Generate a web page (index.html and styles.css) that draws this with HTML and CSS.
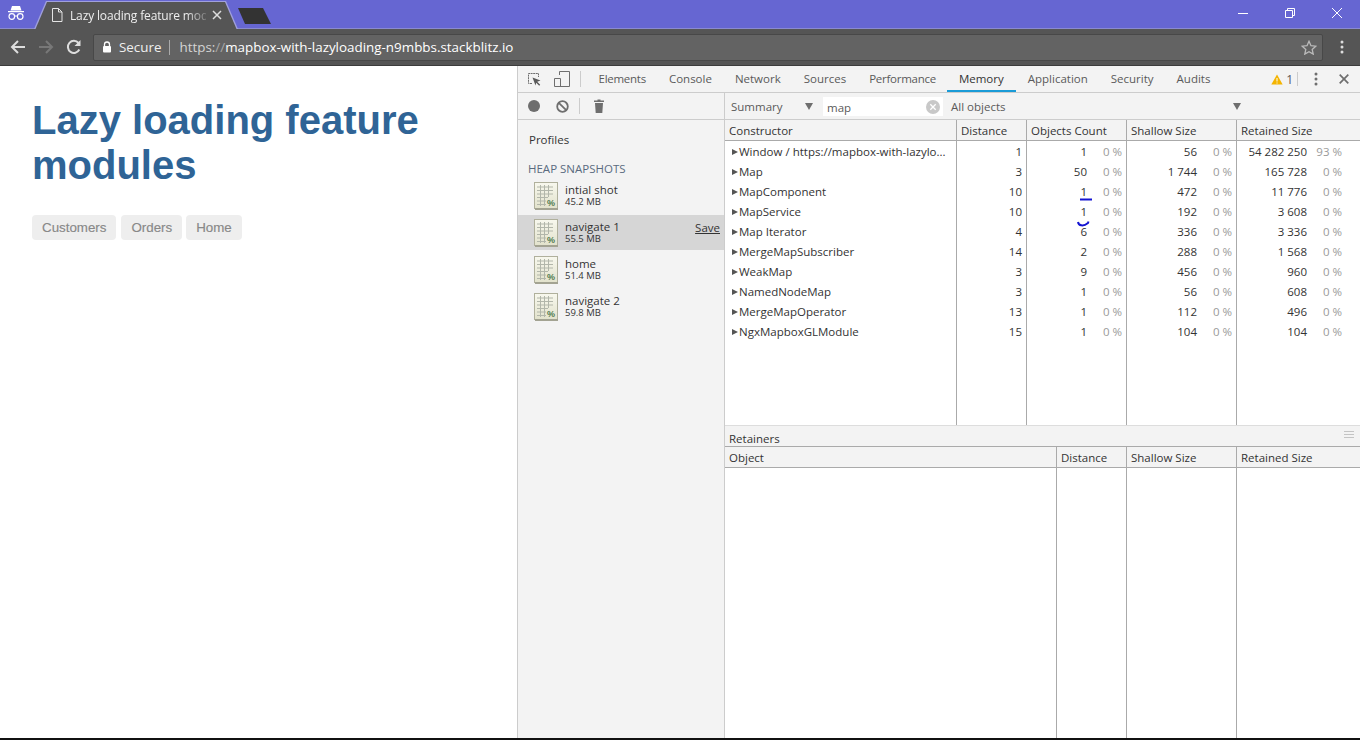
FILE: index.html
```html
<!DOCTYPE html>
<html lang="en">
<head>
<meta charset="utf-8">
<title>Lazy loading feature modules</title>
<link rel="stylesheet" href="styles.css">
</head>
<body>
<svg class="defs" width="0" height="0" aria-hidden="true">
  <defs>
    <linearGradient id="snapbg" x1="0" y1="0" x2="0" y2="1">
      <stop offset="0" stop-color="#f8f8ee"/>
      <stop offset="1" stop-color="#e2e2cc"/>
    </linearGradient>
    <symbol id="snap" viewBox="0 0 24 28">
      <rect x="0.5" y="0.5" width="23" height="26" fill="url(#snapbg)" stroke="#b0b09c"/>
      <rect x="1" y="26" width="23" height="2" fill="#a3a392"/>
      <path d="M3 5H19M3 8.500H19M3 12H19M3 15.500H14M3 19H12M3 22.500H12M6.500 3V24M10.500 3V24M14.500 3V15" stroke="#b2b6aa" stroke-width="1" fill="none"/>
      <text x="13" y="24" class="snap-pct">%</text>
    </symbol>
  </defs>
</svg>
<header class="titlebar">
  <svg class="incognito" width="18" height="16" viewBox="0 0 18 16"><path d="M5 1h8l1.500 4.500h-11zM1 6h16v1.200H1z" fill="#fff"/><circle cx="4.800" cy="11.500" r="2.800" fill="none" stroke="#fff" stroke-width="1.200"/><circle cx="13.200" cy="11.500" r="2.800" fill="none" stroke="#fff" stroke-width="1.200"/><path d="M7.500 11h3" stroke="#fff"/></svg>
  <div class="tab">
    <svg class="page-icon" width="12" height="14" viewBox="0 0 12 14"><path d="M1.500.5h6l3.500 3.500v9.500h-9.500zM7.500.5v3.500h3.500" fill="none" stroke="#e4e4e4"/></svg>
    <span class="tab-title">Lazy loading feature mod</span>
    <svg class="tab-close" width="10" height="10" viewBox="0 0 10 10"><path d="M1 1l8 8M9 1l-8 8" stroke="#ddd" stroke-width="1.500"/></svg>
  </div>
  <div class="newtab"></div>
  <div class="window-buttons">
    <svg width="12" height="12" viewBox="0 0 12 12"><path d="M1 6.500h10" stroke="#fff"/></svg>
    <svg width="12" height="12" viewBox="0 0 12 12"><path d="M3.500 3V1.500h7v7H9M1.500 3.500h7v7h-7z" fill="none" stroke="#fff"/></svg>
    <svg width="12" height="12" viewBox="0 0 12 12"><path d="M1 1l10 10M11 1L1 11" stroke="#fff"/></svg>
  </div>
</header>
<nav class="toolbar">
  <svg class="nav-icon" width="16" height="16" viewBox="0 0 16 16"><path d="M15 8H2.500M8 2L2 8l6 6" fill="none" stroke="#ddd" stroke-width="2"/></svg>
  <svg class="nav-icon" width="16" height="16" viewBox="0 0 16 16"><path d="M1 8h12.500M8 2l6 6-6 6" fill="none" stroke="#787878" stroke-width="2"/></svg>
  <svg class="nav-icon" width="16" height="16" viewBox="0 0 16 16"><path d="M13.300 10.500A6 6 0 1 1 12.500 4" fill="none" stroke="#ddd" stroke-width="2"/><path d="M14.500 1v6h-6z" fill="#ddd"/></svg>
  <div class="omnibox">
    <svg width="10" height="12" viewBox="0 0 10 12"><path d="M2.500 5V3.500a2.500 2.500 0 0 1 5 0V5" fill="none" stroke="#fff" stroke-width="1.300"/><rect x="1" y="5" width="8" height="6.500" rx="1" fill="#fff"/></svg>
    <span class="secure">Secure</span>
    <span class="omni-sep"></span>
    <span class="url"><span class="url-scheme">https:<span class="url-slashes">//</span></span>mapbox-with-lazyloading-n9mbbs.stackblitz.io</span>
    <svg class="star" width="16" height="15" viewBox="0 0 16 15"><path d="M8 1.300l2 4.400 4.800.5-3.600 3.200 1 4.700L8 11.700l-4.200 2.400 1-4.700L1.200 6.200 6 5.700z" fill="none" stroke="#bbb" stroke-width="1.300"/></svg>
  </div>
  <svg class="kebab" width="4" height="14" viewBox="0 0 4 14"><circle cx="2" cy="2" r="1.500" fill="#ddd"/><circle cx="2" cy="7" r="1.500" fill="#ddd"/><circle cx="2" cy="12" r="1.500" fill="#ddd"/></svg>
</nav>
<main class="viewport">
  <section class="page">
    <h1>Lazy loading feature modules</h1>
    <div class="page-nav">
      <a>Customers</a>
      <a>Orders</a>
      <a>Home</a>
    </div>
  </section>
  <section class="devtools">
    <div class="dt-tabs">
      <svg class="dt-icon" width="16" height="16" viewBox="0 0 16 16"><path d="M6 12.500H2.500v-10h10V6" fill="none" stroke="#6e6e6e" stroke-dasharray="2 .6"/><path d="M6.500 6.500l8 3-3.300 1.300 3 3-1 1-3-3L9.500 14.500z" fill="#5a5a5a"/></svg>
      <svg class="dt-icon device" width="16" height="16" viewBox="0 0 16 16"><path d="M5.500 4V.5h10v15H.5V7.500h6v8" fill="none" stroke="#6e6e6e"/></svg>
      <span class="dt-sep"></span>
      <span class="dt-tab tight">Elements</span>
      <span class="dt-tab">Console</span>
      <span class="dt-tab">Network</span>
      <span class="dt-tab">Sources</span>
      <span class="dt-tab tight">Performance</span>
      <span class="dt-tab active">Memory</span>
      <span class="dt-tab">Application</span>
      <span class="dt-tab">Security</span>
      <span class="dt-tab">Audits</span>
      <span class="dt-right">
        <svg width="12" height="11" viewBox="0 0 12 11"><path d="M6 .5l5.700 10H.3z" fill="#f4b400"/><path d="M6 4v3.500M6 8.500v1" stroke="#fff"/></svg>
        <span class="warn-count">1</span>
        <span class="dt-sep small"></span>
        <svg class="dt-kebab" width="4" height="14" viewBox="0 0 4 14"><circle cx="2" cy="2" r="1.500" fill="#6e6e6e"/><circle cx="2" cy="7" r="1.500" fill="#6e6e6e"/><circle cx="2" cy="12" r="1.500" fill="#6e6e6e"/></svg>
        <svg class="dt-close" width="10" height="10" viewBox="0 0 10 10"><path d="M.7.700l8.600 8.600M9.300.700L.7 9.300" stroke="#6e6e6e" stroke-width="1.700"/></svg>
      </span>
    </div>
    <div class="dt-body">
      <aside class="sidebar">
        <div class="side-tools">
          <svg width="12" height="12" viewBox="0 0 12 12"><circle cx="6" cy="6" r="6" fill="#6e6e6e"/></svg>
          <svg class="clear" width="13" height="13" viewBox="0 0 13 13"><circle cx="6.500" cy="6.500" r="5.300" fill="none" stroke="#6e6e6e" stroke-width="1.800"/><path d="M2.800 2.800l7.400 7.400" stroke="#6e6e6e" stroke-width="1.800"/></svg>
          <span class="dt-sep"></span>
          <svg class="trash" width="10" height="14" viewBox="0 0 10 14"><path d="M3.500.5h3v1H10v1.500H0V1.500h3.500zM1 4h8l-.7 10H1.700z" fill="#6e6e6e"/></svg>
        </div>
        <div class="profiles">Profiles</div>
        <div class="heap-title">HEAP SNAPSHOTS</div>
        <div class="snapshot">
          <svg class="snap-icon" width="24" height="28"><use href="#snap"/></svg>
          <div class="snap-text"><div class="snap-name">intial shot</div><div class="snap-size">45.2 MB</div></div>
        </div>
        <div class="snapshot selected">
          <svg class="snap-icon" width="24" height="28"><use href="#snap"/></svg>
          <div class="snap-text"><div class="snap-name">navigate 1</div><div class="snap-size">55.5 MB</div></div>
          <span class="save">Save</span>
        </div>
        <div class="snapshot">
          <svg class="snap-icon" width="24" height="28"><use href="#snap"/></svg>
          <div class="snap-text"><div class="snap-name">home</div><div class="snap-size">51.4 MB</div></div>
        </div>
        <div class="snapshot">
          <svg class="snap-icon" width="24" height="28"><use href="#snap"/></svg>
          <div class="snap-text"><div class="snap-name">navigate 2</div><div class="snap-size">59.8 MB</div></div>
        </div>
      </aside>
      <div class="content">
        <div class="filter-bar">
          <span class="summary">Summary</span>
          <span class="arrow summary-arrow"></span>
          <span class="filter-input">map
            <svg class="clear-x" width="14" height="14" viewBox="0 0 14 14"><circle cx="7" cy="7" r="7" fill="#c8c8c8"/><path d="M4.300 4.300l5.400 5.400M9.700 4.300l-5.400 5.400" stroke="#fff" stroke-width="1.300"/></svg>
          </span>
          <span class="objects-select">All objects</span>
          <span class="arrow objects-arrow"></span>
        </div>
        <div class="upper-grid">
          <table class="grid">
            <colgroup><col class="c-name"><col class="c-dist"><col class="c-count"><col class="c-shallow"><col class="c-retained"></colgroup>
            <thead><tr><th>Constructor</th><th>Distance</th><th>Objects Count</th><th>Shallow Size</th><th>Retained Size</th></tr></thead>
            <tbody>
              <tr><td class="name"><i></i>Window / https://mapbox-with-lazylo...</td><td class="num">1</td><td class="num"><b>1</b><em>0 %</em></td><td class="num"><b>56</b><em>0 %</em></td><td class="num"><b>54 282 250</b><em>93 %</em></td></tr>
              <tr><td class="name"><i></i>Map</td><td class="num">3</td><td class="num"><b>50</b><em>0 %</em></td><td class="num"><b>1 744</b><em>0 %</em></td><td class="num"><b>165 728</b><em>0 %</em></td></tr>
              <tr><td class="name"><i></i>MapComponent</td><td class="num">10</td><td class="num"><b>1</b><em>0 %</em></td><td class="num"><b>472</b><em>0 %</em></td><td class="num"><b>11 776</b><em>0 %</em></td></tr>
              <tr><td class="name"><i></i>MapService</td><td class="num">10</td><td class="num"><b>1</b><em>0 %</em></td><td class="num"><b>192</b><em>0 %</em></td><td class="num"><b>3 608</b><em>0 %</em></td></tr>
              <tr><td class="name"><i></i>Map Iterator</td><td class="num">4</td><td class="num"><b>6</b><em>0 %</em></td><td class="num"><b>336</b><em>0 %</em></td><td class="num"><b>3 336</b><em>0 %</em></td></tr>
              <tr><td class="name"><i></i>MergeMapSubscriber</td><td class="num">14</td><td class="num"><b>2</b><em>0 %</em></td><td class="num"><b>288</b><em>0 %</em></td><td class="num"><b>1 568</b><em>0 %</em></td></tr>
              <tr><td class="name"><i></i>WeakMap</td><td class="num">3</td><td class="num"><b>9</b><em>0 %</em></td><td class="num"><b>456</b><em>0 %</em></td><td class="num"><b>960</b><em>0 %</em></td></tr>
              <tr><td class="name"><i></i>NamedNodeMap</td><td class="num">3</td><td class="num"><b>1</b><em>0 %</em></td><td class="num"><b>56</b><em>0 %</em></td><td class="num"><b>608</b><em>0 %</em></td></tr>
              <tr><td class="name"><i></i>MergeMapOperator</td><td class="num">13</td><td class="num"><b>1</b><em>0 %</em></td><td class="num"><b>112</b><em>0 %</em></td><td class="num"><b>496</b><em>0 %</em></td></tr>
              <tr><td class="name"><i></i>NgxMapboxGLModule</td><td class="num">15</td><td class="num"><b>1</b><em>0 %</em></td><td class="num"><b>104</b><em>0 %</em></td><td class="num"><b>104</b><em>0 %</em></td></tr>
              <tr class="filler"><td></td><td></td><td></td><td></td><td></td></tr>
            </tbody>
          </table>
          <svg class="ink ink-line" width="14" height="3" viewBox="0 0 14 3"><path d="M1 1.500h12" stroke="#1414d2" stroke-width="2"/></svg>
          <svg class="ink ink-curve" width="13" height="7" viewBox="0 0 13 7"><path d="M1 1c.5 3.500 5 5 10 1l.5-1.500" fill="none" stroke="#1414d2" stroke-width="2"/></svg>
        </div>
        <div class="retainers-title">Retainers
          <svg class="grip" width="10" height="7" viewBox="0 0 10 7"><path d="M0 .5h10M0 3.500h10M0 6.500h10" stroke="#c4c4c4"/></svg>
        </div>
        <div class="lower-grid">
          <table class="grid">
            <colgroup><col class="c-object"><col class="c-dist"><col class="c-shallow"><col class="c-retained"></colgroup>
            <thead><tr><th>Object</th><th>Distance</th><th>Shallow Size</th><th>Retained Size</th></tr></thead>
            <tbody><tr class="filler"><td></td><td></td><td></td><td></td></tr></tbody>
          </table>
        </div>
      </div>
    </div>
  </section>
</main>
<div class="bottom-edge"></div>
</body>
</html>
```
FILE: styles.css
```css
* { box-sizing: border-box; }
html, body { margin: 0; height: 100%; overflow: hidden; }
body { display: flex; flex-direction: column; height: 740px; width: 1360px; background: #fff; font-family: "Open Sans", "Noto Sans", sans-serif; font-size: 12px; color: #333; }
.defs { position: absolute; }
.snap-pct { font-family: "Liberation Sans", sans-serif; font-size: 9px; font-weight: bold; fill: #4f7a4f; }

.titlebar { height: 29px; flex: none; display: flex; align-items: flex-end; background: #6666d2; border-bottom: 1px solid #8a8ad0; position: relative; }
.incognito { align-self: flex-start; margin: 5px 0 0 7px; flex: none; }
.tab { width: 204px; height: 28px; margin: 0 0 -1px 9px; flex: none; display: flex; align-items: center; padding-left: 17px; background: #a0a0dc; clip-path: polygon(12px 0, 192px 0, 204px 100%, 0 100%); color: #eee; font-size: 12px; position: relative; isolation: isolate; }
.tab::before { content: ""; position: absolute; inset: 1px 0 0 0; z-index: -1; background: #555; clip-path: polygon(13px 0, 191px 0, 202.500px 100%, 1.500px 100%); }
.page-icon { flex: none; }
.tab-title { margin-left: 7px; width: 136px; white-space: nowrap; flex: none; letter-spacing: -.14px; -webkit-mask-image: linear-gradient(90deg, #000 85%, rgba(0,0,0,.25) 100%); mask-image: linear-gradient(90deg, #000 85%, rgba(0,0,0,.25) 100%); }
.tab-close { margin-left: 6px; flex: none; }
.newtab { width: 33px; height: 16px; align-self: flex-start; margin: 8px 0 0 0; background: #333; clip-path: polygon(0 0, 25px 0, 33px 100%, 7px 100%); flex: none; }
.window-buttons { margin-left: auto; align-self: flex-start; display: flex; gap: 35px; padding: 7px 17px 0 0; }

.toolbar { height: 37px; flex: none; display: flex; align-items: center; background: #555; padding: 0 0 0 10px; border-bottom: 1px solid #3c3c3c; }
.nav-icon { margin-right: 12px; flex: none; }
.nav-icon:nth-of-type(3) { margin-right: 11px; }
.omnibox { width: 1230px; height: 27px; margin-left: 0; display: flex; align-items: center; background: #636363; border: 1px solid #484848; border-radius: 2px; padding: 0 5px 0 8px; color: #fff; }
.secure { margin-left: 7px; font-size: 13.400px; color: #f0f0f0; }
.omni-sep { width: 1px; height: 15px; margin: 0 9px 0 8px; background: #aaa; }
.url { font-size: 13.400px; color: #fff; white-space: nowrap; }
.url-scheme { color: #d4d4d4; }
.url-slashes { color: #a8a8a8; }
.star { margin-left: auto; }
.kebab { margin-left: 17px; }

.viewport { flex: 1; min-height: 0; display: flex; }
.page { width: 517px; flex: none; padding: 32px 32px 0; font-family: "Liberation Sans", Arial, sans-serif; }
.page h1 { margin: 0; color: #2f6496; font-size: 40px; line-height: 45px; font-weight: bold; }
.page-nav { display: flex; gap: 5px; margin-top: 27px; }
.page-nav a { padding: 0 10px; height: 25px; line-height: 25px; background: #eee; border-radius: 4px; color: #888; font-size: 13.330px; -webkit-text-stroke: .15px #888; }
.page-nav a:nth-child(3) { margin-left: -1px; }

.devtools { flex: 1; min-width: 0; display: flex; flex-direction: column; background: #f3f3f3; border-left: 1px solid #ccc; }
.dt-tabs { height: 27px; flex: none; display: flex; align-items: center; border-bottom: 1px solid #ccc; padding-left: 8px; color: #5a5a5a; }
.dt-icon { flex: none; }
.dt-icon.device { margin-left: 12px; }
.dt-sep { width: 1px; height: 16px; background: #ccc; margin: 0 6px 0 10px; flex: none; }
.dt-tab { height: 26px; line-height: 26px; padding: 0 11.500px; white-space: nowrap; font-size: 11.500px; }
.dt-tab.tight { letter-spacing: -.26px; }
.dt-tab.active { color: #333; padding-right: 12.500px; border-bottom: 2px solid #1a9bd7; }
.dt-right { margin-left: auto; display: flex; align-items: center; padding-right: 11px; }
.warn-count { margin-left: 3px; font-size: 12px; }
.dt-sep.small { margin: 0 16px 0 4px; height: 14px; }
.dt-kebab { margin-right: 21px; }

.dt-body { flex: 1; min-height: 0; display: flex; }
.sidebar { width: 207px; flex: none; border-right: 1px solid #ccc; }
.side-tools { height: 27px; display: flex; align-items: center; padding-left: 10px; border-bottom: 1px solid #ccc; }
.clear { margin-left: 16px; }
.side-tools .dt-sep { margin: 0 14px 0 10px; }
.profiles { margin: 11px 0 0 11px; height: 17px; line-height: 17px; font-size: 11.500px; color: #333; }
.heap-title { margin: 12px 0 1px 10px; height: 17px; line-height: 17px; font-size: 11.500px; color: #5a6b80; }
.snapshot { height: 35px; margin-bottom: 2px; display: flex; align-items: center; padding: 0 4px 0 16px; }
.snapshot.selected { background: #d6d6d6; }
.snap-icon { flex: none; }
.snap-text { margin: -2px 0 0 7px; }
.snap-name { font-size: 11.500px; line-height: 13px; color: #333; }
.snap-size { font-size: 9.500px; line-height: 11px; color: #333; }
.save { margin-left: auto; margin-top: -10px; font-size: 11.500px; text-decoration: underline; color: #333; }

.content { flex: 1; min-width: 0; display: flex; flex-direction: column; }
.filter-bar { height: 27px; flex: none; display: flex; align-items: center; border-bottom: 1px solid #ccc; color: #5a5a5a; font-size: 11.500px; padding-left: 6px; }
.summary { width: 74px; }
.arrow { width: 0; height: 0; border: 4px solid transparent; border-top: 7px solid #6e6e6e; border-bottom: 0; flex: none; }
.filter-input { margin-left: 10px; width: 120px; height: 19px; line-height: 21px; background: #fff; padding-left: 4px; position: relative; }
.clear-x { position: absolute; right: 3px; top: 3px; }
.objects-select { margin-left: 8px; width: 282px; }

.upper-grid { height: 305px; flex: none; position: relative; background: #fff; }
.lower-grid { flex: 1; min-height: 0; background: #fff; }
.grid { width: 635px; height: 100%; table-layout: fixed; border-collapse: separate; border-spacing: 0; font-size: 11.500px; color: #333; }
.c-name { width: 232px; }
.c-dist { width: 70px; }
.c-count { width: 100px; }
.c-shallow { width: 110px; }
.c-retained { width: 123px; }
.c-object { width: 332px; }
.grid th { height: 21px; padding: 0 4px; text-align: left; font-weight: normal; background: #f3f3f3; border-bottom: 1px solid #aaa; border-right: 1px solid #aaa; color: #333; white-space: nowrap; overflow: hidden; }
.grid th:last-child, .grid td:last-child { border-right: 0; }
.grid td { height: 20px; padding: 0 4px; border-right: 1px solid #aaa; white-space: nowrap; overflow: hidden; vertical-align: middle; }
.grid td.name { padding-left: 7px; }
.grid td.name i { display: inline-block; width: 0; height: 0; margin-right: 1px; border: 3.500px solid transparent; border-left: 6px solid #555; border-right: 0; vertical-align: 1px; }
.grid td.num { text-align: right; }
.grid td.num b { font-weight: normal; }
.grid td.num em { display: inline-block; width: 35px; font-style: normal; color: #9a9a9a; }
.grid td:last-child em { width: 35px; margin-right: 14px; }
.grid .filler td { height: auto; }
.ink { position: absolute; }
.ink-line { left: 354px; top: 78px; }
.ink-curve { left: 352px; top: 101px; }

.retainers-title { height: 22px; flex: none; padding: 4px 0 0 4px; line-height: 17px; font-size: 11.500px; background: #f3f3f3; border-top: 1px solid #ddd; border-bottom: 1px solid #aaa; color: #333; position: relative; }
.grip { position: absolute; right: 6px; top: 5px; }

.bottom-edge { height: 2px; flex: none; background: #111; }
```
